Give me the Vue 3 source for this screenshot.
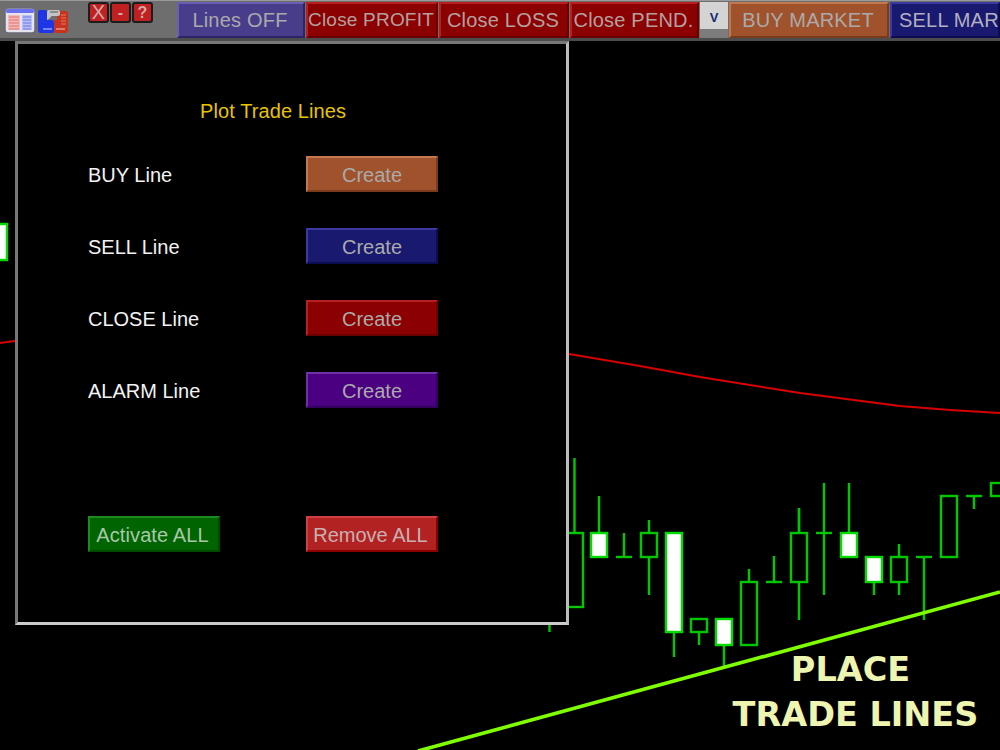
<script setup>
const hollow = [
  { x: 567, y: 533, h: 74, wx: 574.5, w1: 458, w2: 533 },
  { x: 641, y: 533, h: 24, wx: 649, w1: 520, w2: 595 },
  { x: 691, y: 619, h: 13, wx: 699, w1: 632, w2: 645 },
  { x: 741, y: 582, h: 63, wx: 749, w1: 569, w2: 582 },
  { x: 791, y: 533, h: 49, wx: 799, w1: 508, w2: 620 },
  { x: 891, y: 557, h: 25, wx: 899, w1: 544, w2: 595 },
  { x: 941, y: 496, h: 61, wx: 949, w1: 496, w2: 496 },
  { x: 991, y: 483, h: 13, wx: 999, w1: 483, w2: 483 },
]
const solid = [
  { x: -9, y: 224, h: 36, wx: -1, w1: 224, w2: 224 },
  { x: 591, y: 533, h: 24, wx: 599, w1: 496, w2: 533 },
  { x: 666, y: 533, h: 99, wx: 674, w1: 533, w2: 657 },
  { x: 716, y: 619, h: 26, wx: 724, w1: 619, w2: 668 },
  { x: 841, y: 533, h: 24, wx: 849, w1: 483, w2: 533 },
  { x: 866, y: 557, h: 25, wx: 874, w1: 557, w2: 595 },
]
const doji = [
  { x: 616, y: 557, wx: 624, w1: 533, w2: 557 },
  { x: 766, y: 582, wx: 774, w1: 556, w2: 582 },
  { x: 816, y: 533, wx: 824, w1: 483, w2: 595 },
  { x: 916, y: 557, wx: 924, w1: 557, w2: 620 },
  { x: 966, y: 496, wx: 974, w1: 496, w2: 509 },
]
const candles = [...hollow, ...solid]

const rows = [
  { label: 'BUY Line', tone: 'buy' },
  { label: 'SELL Line', tone: 'sell' },
  { label: 'CLOSE Line', tone: 'close' },
  { label: 'ALARM Line', tone: 'alarm' },
]
</script>

<template>
  <div class="page">
    <svg class="chart" width="1000" height="750" viewBox="0 0 1000 750">
      <polyline
        points="0,343 14,341 569,354 640,366 700,377 800,393 900,406 950,410 1000,413"
        fill="none" stroke="#d80000" stroke-width="2"
      />
      <line x1="549.5" y1="620" x2="549.5" y2="632" stroke="#00c800" stroke-width="2.4" />
      <line
        v-for="c in candles" :key="'w' + c.x"
        :x1="c.wx" :x2="c.wx" :y1="c.w1" :y2="c.w2"
        stroke="#00c800" stroke-width="2.4"
      />
      <rect
        v-for="c in hollow" :key="'h' + c.x"
        :x="c.x" :y="c.y" width="16" :height="c.h"
        fill="#000" stroke="#00c800" stroke-width="2.4"
      />
      <line x1="799" x2="799" y1="508" y2="533" stroke="#00c800" stroke-width="2.4" />
      <rect
        v-for="c in solid" :key="'s' + c.x"
        :x="c.x" :y="c.y" width="16" :height="c.h"
        fill="#fff" stroke="#00dc00" stroke-width="2.4"
      />
      <g v-for="d in doji" :key="'d' + d.x">
        <line :x1="d.wx" :x2="d.wx" :y1="d.w1" :y2="d.w2" stroke="#00c800" stroke-width="2.4" />
        <line :x1="d.x" :x2="d.x + 16" :y1="d.y" :y2="d.y" stroke="#00c800" stroke-width="2.4" />
      </g>
      <line x1="418" y1="751" x2="1000" y2="592" stroke="#7fff00" stroke-width="3.6" />
    </svg>

    <div class="caption"><span class="caption-top">PLACE</span><br />TRADE LINES</div>

    <header class="toolbar">
      <div class="tools">
        <svg class="icon" width="32" height="27" viewBox="0 0 32 27">
          <rect x="1" y="1" width="30" height="25" rx="3" fill="#e4e4ee" stroke="#6a6a78" stroke-width="1.5" />
          <rect x="2" y="2" width="28" height="4" rx="1.5" fill="#6a70f0" />
          <rect x="4" y="8" width="12" height="15" fill="#f4b8b8" />
          <path d="M5 10h10M5 13h10M5 16h10M5 19h10M5 22h10" stroke="#e07070" stroke-width="1" />
          <rect x="18" y="8" width="10" height="15" fill="#b8c0f8" />
          <path d="M19 10h8M19 13h8M19 16h8M19 19h8M19 22h8" stroke="#6a78e8" stroke-width="1" />
        </svg>
        <svg class="icon second" width="32" height="26" viewBox="0 0 32 26">
          <path d="M1 4q0-2 2-2h5q2 0 2 2v8h5q2 0 2 2v9q0 2-2 2H4q-3 0-3-3Z" fill="#1f36e6" />
          <path d="M6 21h9" stroke="#9aa8ff" stroke-width="1.4" />
          <path d="M17 12h3V5q0-2 2-2h6q3 0 3 3v16q0 3-3 3H18q-1 0-1-2Z" fill="#c8321e" />
          <path d="M24 7h5M24 10h5M24 13h5M24 16h5" stroke="#e87860" stroke-width="1" />
          <path d="M19 21h9" stroke="#e8a090" stroke-width="1.4" />
          <path d="M10 4q0-2 2-2h9q2 0 2 2v2q0 2-2 2H15q-1 0-2 2l-3 2Z" fill="#c4c4c4" />
          <rect x="13" y="3" width="8" height="2" fill="#8c8c8c" />
        </svg>
        <div class="mini-group">
          <span class="mini big">X</span>
          <span class="mini">-</span>
          <span class="mini">?</span>
        </div>
      </div>
      <button class="bar-btn lines">Lines OFF</button>
      <button class="bar-btn red profit">Close PROFIT</button>
      <button class="bar-btn red loss">Close LOSS</button>
      <button class="bar-btn red pend">Close PEND.</button>
      <div class="vtoggle"><span>V</span></div>
      <button class="bar-btn buy-market">BUY MARKET</button>
      <button class="bar-btn sell-market">SELL MAR</button>
    </header>

    <section class="panel">
      <h2 class="title">Plot Trade Lines</h2>
      <div class="rows">
        <div v-for="r in rows" :key="r.label" class="row">
          <span class="label">{{ r.label }}</span>
          <button class="action" :class="r.tone">Create</button>
        </div>
      </div>
      <div class="row footer">
        <button class="action green">Activate ALL</button>
        <button class="action crimson">Remove ALL</button>
      </div>
    </section>
  </div>
</template>

<style scoped>
.page {
  position: relative;
  width: 1000px;
  height: 750px;
  overflow: hidden;
  background: #000;
  font-family: "Liberation Sans", Arial, sans-serif;
}
.chart {
  position: absolute;
  left: 0;
  top: 0;
}
.caption {
  position: absolute;
  left: 700px;
  top: 647px;
  width: 311px;
  text-align: center;
  font-family: "DejaVu Sans", sans-serif;
  font-weight: 700;
  font-size: 33.5px;
  line-height: 45px;
  color: #eef5b0;
}
.caption-top {
  display: inline-block;
  padding-right: 10px;
}
.toolbar {
  position: relative;
  display: flex;
  align-items: flex-start;
  gap: 1px;
  width: 1000px;
  height: 41px;
  box-sizing: border-box;
  padding-top: 1px;
  background: #6e6e6e;
  border-top: 1px solid #9a9a9a;
  border-bottom: 3px solid #4c4c4c;
  overflow: hidden;
}
.tools {
  display: flex;
  align-items: flex-start;
  width: 176px;
  flex: none;
  padding-left: 4px;
  box-sizing: border-box;
}
.icon {
  margin-top: 5px;
  flex: none;
}
.second {
  margin-left: 1px;
  margin-top: 6px;
}
.mini-group {
  display: flex;
  gap: 1px;
  margin-left: 19px;
}
.mini {
  width: 21px;
  height: 21px;
  box-sizing: border-box;
  border: 2px solid #1c1c1c;
  border-radius: 3px;
  background: #c02020;
  color: #d0a8a8;
  font-weight: 700;
  font-size: 16px;
  line-height: 17px;
  text-align: center;
}
.big {
  font-size: 20px;
  font-weight: 400;
}
.bar-btn {
  flex: none;
  height: 36px;
  box-sizing: border-box;
  padding: 0 2px 0 0;
  border-style: solid;
  border-width: 2px;
  font-family: inherit;
  font-size: 20px;
  letter-spacing: 0.2px;
  color: #aaa;
  white-space: nowrap;
  overflow: hidden;
}
.lines {
  width: 128px;
  background: #483d8b;
  border-color: #6a5fb0 #2c2468 #2c2468 #6a5fb0;
}
.red {
  background: #8b0000;
  border-color: #b82020 #6a0000 #6a0000 #b82020;
  color: #b4a0a0;
}
.profit {
  width: 132px;
  font-size: 19px;
}
.loss {
  width: 130px;
}
.pend {
  width: 129px;
}
.vtoggle {
  flex: none;
  width: 28px;
  height: 36px;
  background: linear-gradient(#d4d4d4 0 27px, #7c7c7c 27px);
}
.vtoggle span {
  display: block;
  text-align: center;
  font-size: 13px;
  font-weight: 700;
  line-height: 32px;
  color: #1a2a70;
}
.buy-market {
  width: 160px;
  background: #a0522d;
  border-color: #c47850 #7a3a1c #7a3a1c #c47850;
}
.sell-market {
  width: 110px;
  text-align: left;
  padding-left: 7px;
  background: #191970;
  border-color: #3a3aa0 #0c0c50 #0c0c50 #3a3aa0;
  color: #b0b0c0;
}
.panel {
  position: absolute;
  left: 15px;
  top: 41px;
  width: 554px;
  height: 584px;
  box-sizing: border-box;
  padding-left: 70px;
  background: #000;
  border: 3px solid;
  border-color: #777 #bbb #ccc #777;
}
.title {
  margin: 55px 0 0 112px;
  height: 57px;
  font-size: 20px;
  font-weight: 400;
  line-height: 24px;
  letter-spacing: 0.1px;
  color: #e8c400;
}
.rows {
  display: flex;
  flex-direction: column;
  gap: 36px;
}
.row {
  display: flex;
  align-items: center;
  justify-content: space-between;
  width: 350px;
  height: 36px;
}
.label {
  padding-top: 3px;
  color: #f2f2f2;
  font-size: 20px;
}
.footer {
  margin-top: 108px;
}
.action {
  width: 132px;
  height: 36px;
  box-sizing: border-box;
  padding: 2px 0 0;
  border-style: solid;
  border-width: 2px;
  font-family: inherit;
  font-size: 20px;
  color: #aaa;
}
.buy {
  background: #a0522d;
  border-color: #c47850 #7a3a1c #7a3a1c #c47850;
}
.sell {
  background: #191970;
  border-color: #3a3aa0 #0c0c50 #0c0c50 #3a3aa0;
}
.close {
  background: #8b0000;
  border-color: #b82020 #6a0000 #6a0000 #b82020;
}
.alarm {
  background: #4b0082;
  border-color: #6f30a8 #340060 #340060 #6f30a8;
}
.green {
  background: #006400;
  border-color: #1f8a1f #004a00 #004a00 #1f8a1f;
  color: #a8c8a8;
  padding-right: 3px;
  letter-spacing: 0.1px;
}
.crimson {
  background: #b22222;
  border-color: #d04040 #8b0000 #8b0000 #d04040;
  color: #c8b0b0;
  padding-right: 3px;
}
</style>
